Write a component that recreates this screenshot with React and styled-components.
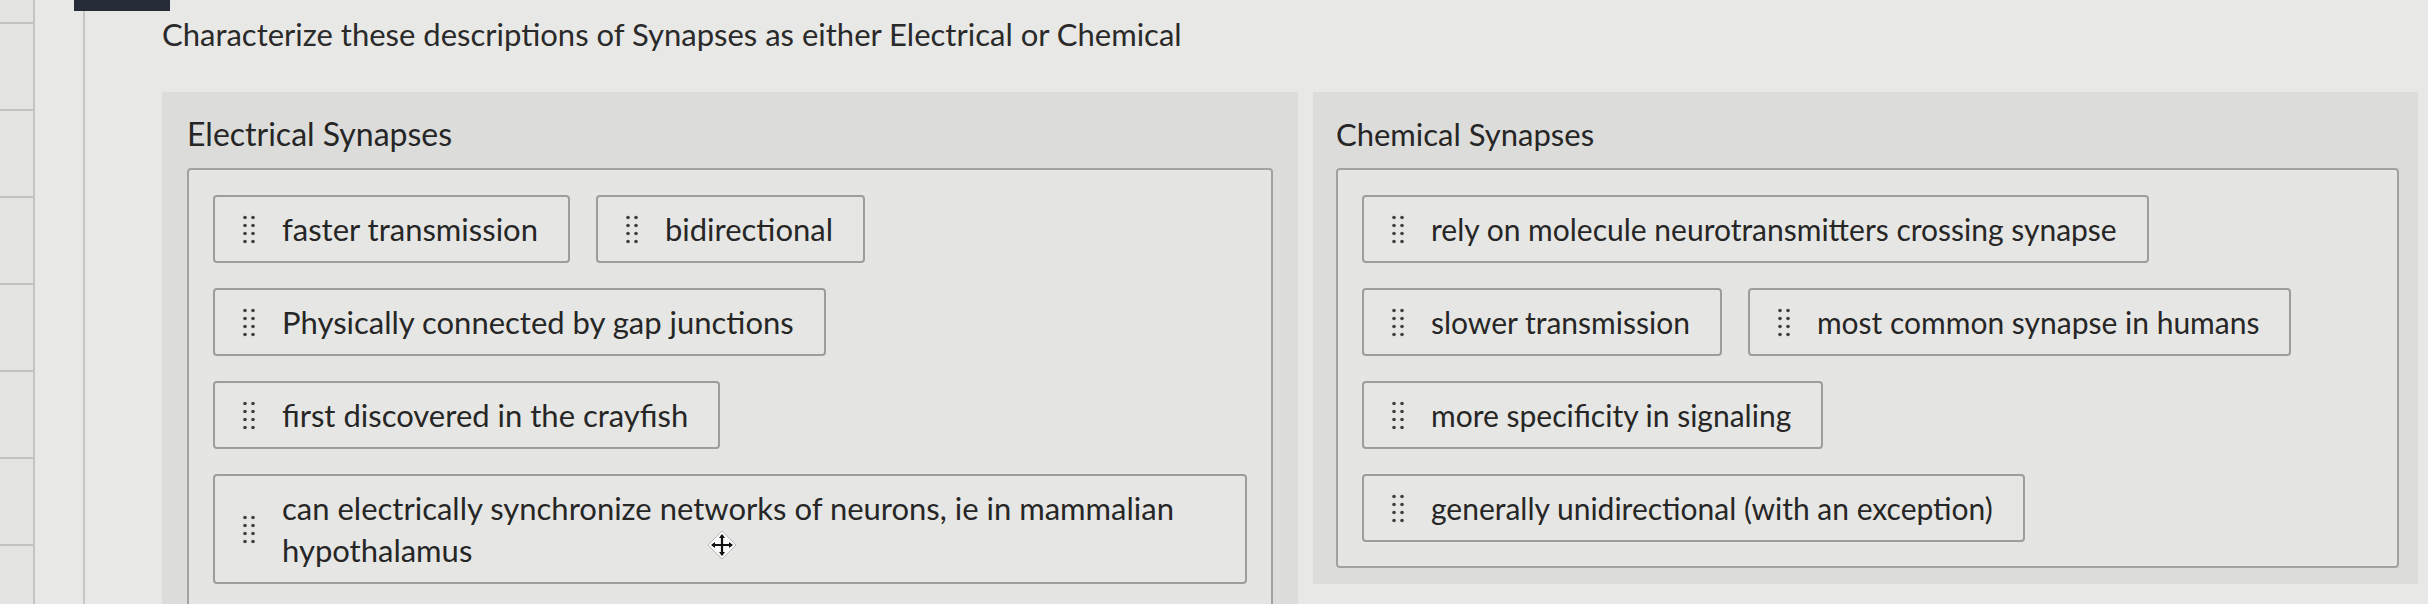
import styled, { createGlobalStyle } from "styled-components"

const GlobalStyle = createGlobalStyle`
    html, body {
        margin: 0;
        padding: 0;
        background: #e8e8e6;
    }
    * {
        box-sizing: border-box;
    }
`

const Page = styled.div`
    position: relative;
    display: flex;
    height: 604px;
    overflow: hidden;
    font-family: Lato, "Open Sans", sans-serif;
    color: #2b2b2b;
`

const Sidebar = styled.div`
    width: 35px;
    flex-shrink: 0;
    background: #e4e4e2;
    border-right: 2px solid #c4c4c2;
    padding-top: 22px;
`

const SidebarRow = styled.div`
    height: 87px;
    border-top: 2px solid #c2c2c0;
`

const Gutter = styled.div`
    width: 50px;
    flex-shrink: 0;
    border-right: 2px solid #c6c6c4;
`

const TopTab = styled.div`
    position: absolute;
    left: 74px;
    top: 0;
    width: 96px;
    height: 11px;
    background: #262d38;
`

const Main = styled.main`
    flex: 1;
    padding: 17px 0 0 77px;
`

const Title = styled.h1`
    margin: 0;
    font-size: 31px;
    font-weight: 400;
    line-height: 34px;
    color: #2a2a2a;
`

const Columns = styled.div`
    margin-top: 41px;
    display: grid;
    grid-template-columns: 1136px 1105px;
    gap: 15px;
    align-items: start;
`

const Column = styled.section`
    background: #dcdcda;
    padding: 25px ${({$right}) => ($right ? "19px" : "25px")} ${({$tall}) => ($tall ? "120px" : "16px")} ${({$right}) => ($right ? "23px" : "25px")};
`

const Heading = styled.h2`
    margin: 0 0 17px;
    font-size: ${({$size}) => $size}px;
    font-weight: 400;
    line-height: 34px;
    color: #262626;
`

const DropZone = styled.div`
    background: #e5e5e3;
    border: 2px solid #a2a2a0;
    border-radius: 4px;
    padding: 25px 24px 24px;
    display: flex;
    flex-wrap: wrap;
    align-content: flex-start;
    column-gap: 26px;
    row-gap: 25px;
`

const Card = styled.div`
    max-width: 100%;
    display: flex;
    align-items: center;
    gap: 27px;
    padding: 11px 30px 11px 28px;
    background: #e6e6e4;
    border: 2px solid #9d9d9b;
    border-radius: 4px;
`

const Label = styled.span`
    font-size: ${({$size}) => $size}px;
    line-height: 42px;
    color: #262626;
`

const Handle = () => (
    <svg width="12" height="29" viewBox="0 0 12 29" style={{flexShrink: 0}}>
        {[2.5, 10.5, 18.5, 26.5].map((y) =>
            [2, 10].map((x) => (
                <circle key={`${x}-${y}`} cx={x} cy={y} r="1.8" fill="#3f3f3f" />
            ))
        )}
    </svg>
)

const Cursor = styled.svg`
    position: absolute;
    left: 707px;
    top: 530px;
`

const MoveCursor = () => (
    <Cursor width="30" height="30" viewBox="0 0 30 30">
        <path d="M15 1 L29 15 L15 29 L1 15 Z" fill="#fafafa" stroke="#b8b8b8" strokeWidth="1" />
        <path d="M15 5 V25 M5 15 H25" stroke="#111" strokeWidth="2.2" />
        <path d="M15 4 L12 8 H18 Z M15 26 L12 22 H18 Z M4 15 L8 12 V18 Z M26 15 L22 12 V18 Z" fill="#111" />
    </Cursor>
)

const electrical = [
    "faster transmission",
    "bidirectional",
    "Physically connected by gap junctions",
    "first discovered in the crayfish",
    "can electrically synchronize networks of neurons, ie in mammalian hypothalamus",
]

const chemical = [
    "rely on molecule neurotransmitters crossing synapse",
    "slower transmission",
    "most common synapse in humans",
    "more specificity in signaling",
    "generally unidirectional (with an exception)",
]

const Bucket = ({title, items, size, right, tall}) => (
    <Column $right={right} $tall={tall}>
        <Heading $size={size + 1}>{title}</Heading>
        <DropZone>
            {items.map((text) => (
                <Card key={text}>
                    <Handle />
                    <Label $size={size}>{text}</Label>
                </Card>
            ))}
        </DropZone>
    </Column>
)

const App = () => {
    return (
        <>
            <GlobalStyle />
            <Page>
                <Sidebar>
                    {Array.from({length: 7}).map((_, i) => (
                        <SidebarRow key={i} />
                    ))}
                </Sidebar>
                <Gutter />
                <TopTab />
                <Main>
                    <Title>Characterize these descriptions of Synapses as either Electrical or Chemical</Title>
                    <Columns>
                        <Bucket title="Electrical Synapses" items={electrical} size={31} tall />
                        <Bucket title="Chemical Synapses" items={chemical} size={30} right />
                    </Columns>
                </Main>
                <MoveCursor />
            </Page>
        </>
    )
}

export default App
